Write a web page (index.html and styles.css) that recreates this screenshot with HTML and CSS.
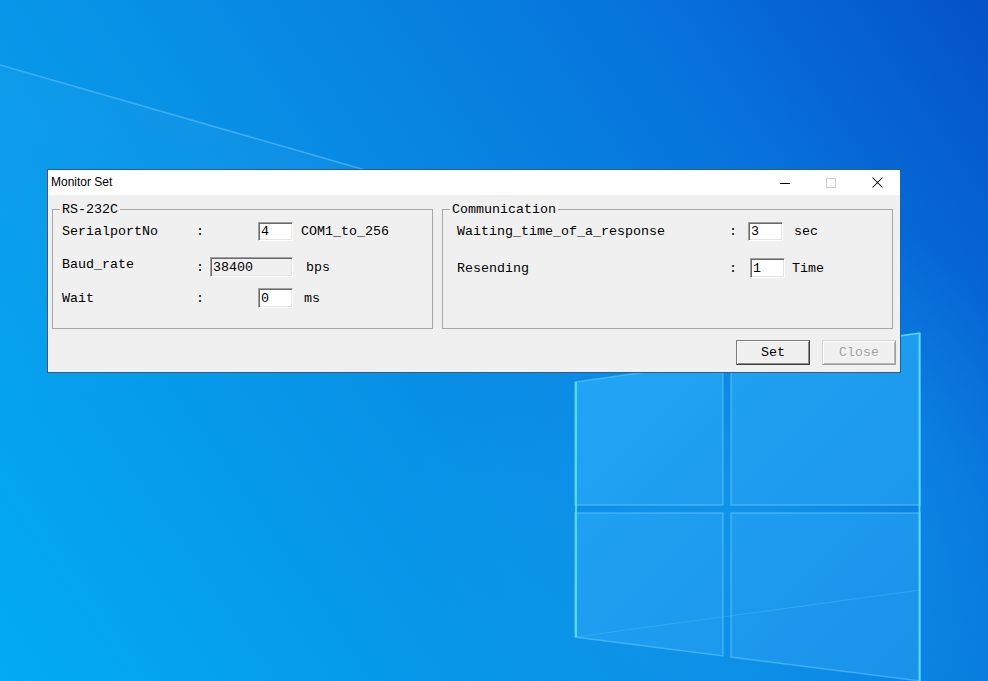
FILE: index.html
```html
<!DOCTYPE html>
<html lang="en">
<head>
<meta charset="utf-8">
<title>Monitor Set</title>
<link rel="stylesheet" href="styles.css">
</head>
<body>
<div class="desktop">
  <svg class="wallpaper" width="988" height="681" viewBox="0 0 988 681" aria-hidden="true">
    <defs>
      <linearGradient id="bg" gradientUnits="userSpaceOnUse" x1="0" y1="681" x2="988" y2="0">
        <stop offset="0" stop-color="#02abf4"/>
        <stop offset="0.4" stop-color="#0891e6"/>
        <stop offset="0.75" stop-color="#0774dc"/>
        <stop offset="1" stop-color="#0552c6"/>
      </linearGradient>
      <radialGradient id="glow" gradientUnits="userSpaceOnUse" cx="740" cy="520" r="330">
        <stop offset="0" stop-color="#1aa2f2" stop-opacity="0.55"/>
        <stop offset="1" stop-color="#1aa2f2" stop-opacity="0"/>
      </radialGradient>
      <linearGradient id="pane" gradientUnits="userSpaceOnUse" x1="575" y1="340" x2="920" y2="680">
        <stop offset="0" stop-color="#22a6f4"/>
        <stop offset="1" stop-color="#1a92ea"/>
      </linearGradient>
      <linearGradient id="beam" gradientUnits="userSpaceOnUse" x1="0" y1="100" x2="0" y2="420">
        <stop offset="0" stop-color="#ffffff" stop-opacity="0.03"/>
        <stop offset="1" stop-color="#ffffff" stop-opacity="0"/>
      </linearGradient>
    </defs>
    <rect width="988" height="681" fill="url(#bg)"/>
    <rect width="988" height="681" fill="url(#glow)"/>
    <polygon points="0,66 400,180 560,260 0,420" fill="url(#beam)"/>
    <line x1="0" y1="65" x2="400" y2="180" stroke="#4db4f4" stroke-width="1.6" stroke-opacity="0.8"/>
    <g stroke="#7fdcff" stroke-opacity="0.4" stroke-width="1.5">
      <polygon points="575,382 723,361 723,505 575,505" fill="url(#pane)"/>
      <polygon points="731,360 920,333 920,505 731,505" fill="url(#pane)"/>
      <polygon points="575,513 723,513 723,656 575,637" fill="url(#pane)"/>
      <polygon points="731,513 920,513 920,681 731,657" fill="url(#pane)"/>
    </g>
    <line x1="575" y1="637" x2="920" y2="590" stroke="#6fd0ff" stroke-opacity="0.25" stroke-width="1.2"/>
    <line x1="576" y1="382" x2="576" y2="637" stroke="#5fe4ff" stroke-width="2" stroke-opacity="0.85"/>
    <line x1="919.5" y1="333" x2="919.5" y2="681" stroke="#5fe4ff" stroke-width="2" stroke-opacity="0.85"/>
    <line x1="731" y1="360" x2="920" y2="333" stroke="#6fe0ff" stroke-width="1.5" stroke-opacity="0.7"/>
  </svg>

  <div class="window">
    <div class="titlebar">
      <span class="title">Monitor Set</span>
      <div class="caption">
        <span class="cap-btn">
          <svg width="10" height="10" viewBox="0 0 10 10"><path d="M0 5.5H10" stroke="#000" stroke-width="1"/></svg>
        </span>
        <span class="cap-btn">
          <svg width="10" height="10" viewBox="0 0 10 10"><rect x="0.5" y="0.5" width="9" height="9" fill="none" stroke="#cccccc" stroke-width="1"/></svg>
        </span>
        <span class="cap-btn">
          <svg width="11" height="11" viewBox="0 0 11 11"><path d="M0.5 0.5L10.5 10.5M10.5 0.5L0.5 10.5" stroke="#000" stroke-width="1.05"/></svg>
        </span>
      </div>
    </div>

    <div class="client">
      <div class="groups">
        <fieldset class="group group-rs">
          <legend>RS-232C</legend>
          <div class="group-body body-rs">
            <div class="row h19 gap16">
              <span class="lbl lbl-rs">SerialportNo</span>
              <span class="colon">:</span>
              <input class="field narrow off-54 h19" value="4" readonly>
              <span class="unit m8">COM1_to_256</span>
            </div>
            <div class="row h20 gap11">
              <span class="lbl lbl-rs lift">Baud_rate</span>
              <span class="colon">:</span>
              <input class="field wide off-6 h20" value="38400" disabled>
              <span class="unit m13">bps</span>
            </div>
            <div class="row h20">
              <span class="lbl lbl-rs">Wait</span>
              <span class="colon">:</span>
              <input class="field narrow off-54 h20" value="0" readonly>
              <span class="unit m11">ms</span>
            </div>
          </div>
        </fieldset>

        <fieldset class="group group-comm">
          <legend>Communication</legend>
          <div class="group-body body-comm">
            <div class="row h19 gap17">
              <span class="lbl lbl-comm">Waiting_time_of_a_response</span>
              <span class="colon">:</span>
              <input class="field narrow off-11 h19" value="3" readonly>
              <span class="unit m11">sec</span>
            </div>
            <div class="row h20">
              <span class="lbl lbl-comm">Resending</span>
              <span class="colon">:</span>
              <input class="field narrow off-13 h20" value="1" readonly>
              <span class="unit m7">Time</span>
            </div>
          </div>
        </fieldset>
      </div>

      <div class="actions">
        <button class="btn btn-default" type="button">Set</button>
        <button class="btn" type="button" disabled>Close</button>
      </div>
    </div>
  </div>
</div>
</body>
</html>
```

FILE: styles.css
```css
* {
  box-sizing: border-box;
}

html,
body {
  margin: 0;
  padding: 0;
}

body {
  width: 988px;
  height: 681px;
  overflow: hidden;
  background: #0a80dc;
  font-family: "Liberation Mono", "DejaVu Sans Mono", monospace;
}

.desktop {
  position: relative;
  width: 988px;
  height: 681px;
}

.wallpaper {
  position: absolute;
  left: 0;
  top: 0;
  display: block;
}

.window {
  position: absolute;
  left: 47px;
  top: 169px;
  width: 854px;
  height: 204px;
  border: 1px solid #2b5e89;
  background: #f0f0f0;
  display: flex;
  flex-direction: column;
}

.titlebar {
  height: 25px;
  flex: 0 0 25px;
  background: #ffffff;
  display: flex;
  align-items: center;
  justify-content: space-between;
}

.title {
  font-family: "Liberation Sans", Arial, sans-serif;
  font-size: 12px;
  color: #000;
  padding-left: 3px;
  line-height: 25px;
}

.caption {
  display: flex;
  height: 25px;
}

.cap-btn {
  width: 46px;
  height: 25px;
  display: flex;
  align-items: center;
  justify-content: center;
}

.cap-btn svg {
  display: block;
}

.client {
  flex: 1;
  padding: 7px 0 0 4px;
  display: flex;
  flex-direction: column;
}

.groups {
  display: flex;
  gap: 9px;
}

.group {
  margin: 0;
  padding: 0;
  border: 1px solid #a8a8a8;
  height: 127px;
  min-width: 0;
}

.group-rs {
  width: 381px;
}

.group-comm {
  width: 451px;
}

legend {
  margin-left: 7px;
  padding: 1px 2px 0;
  font-size: 13.333px;
  line-height: 14px;
  color: #000;
}

.group-body {
  padding-top: 5px;
}

.body-rs {
  padding-left: 9px;
}

.body-comm {
  padding-left: 14px;
}

.row {
  display: flex;
  align-items: center;
  font-size: 13.333px;
  color: #000;
  white-space: pre;
}

.h19 {
  height: 19px;
}

.h20 {
  height: 20px;
}

.gap16 {
  margin-bottom: 16px;
}

.gap11 {
  margin-bottom: 11px;
}

.gap17 {
  margin-bottom: 17px;
}

.lbl-rs {
  width: 134px;
}

.lbl-comm {
  width: 272px;
}

.lift {
  margin-bottom: 5px;
}

.colon {
  width: 8px;
}

.field {
  margin: 0;
  padding: 0 0 0 2px;
  border: 1px solid;
  border-color: #a0a0a0 #ffffff #ffffff #a0a0a0;
  box-shadow: inset 1px 1px 0 #696969, inset -1px -1px 0 #e3e3e3;
  background: #ffffff;
  font-family: "Liberation Mono", "DejaVu Sans Mono", monospace;
  font-size: 13.333px;
  color: #000;
  outline: none;
}

.field:disabled {
  background: #f0f0f0;
  color: #000;
  -webkit-text-fill-color: #000;
  opacity: 1;
}

.narrow {
  width: 35px;
}

.wide {
  width: 83px;
}

.off-54 {
  margin-left: 54px;
}

.off-6 {
  margin-left: 6px;
}

.off-11 {
  margin-left: 11px;
}

.off-13 {
  margin-left: 13px;
}

.m7 {
  margin-left: 7px;
}

.m8 {
  margin-left: 8px;
}

.m11 {
  margin-left: 11px;
}

.m13 {
  margin-left: 13px;
}

.actions {
  display: flex;
  justify-content: flex-end;
  gap: 12px;
  margin-top: 11px;
  padding-right: 4px;
}

.btn {
  width: 74px;
  height: 25px;
  margin: 0;
  padding: 0;
  font-family: "Liberation Mono", "DejaVu Sans Mono", monospace;
  font-size: 13.333px;
  color: #000;
  background: #f0f0f0;
  border: 1px solid;
  border-color: #a0a0a0 #5a5a5a #5a5a5a #a0a0a0;
  box-shadow: inset 1px 1px 0 #ffffff, inset -1px -1px 0 #8a8a8a;
}

.btn-default {
  border-color: #7a7a7a #404040 #404040 #7a7a7a;
}

.btn:disabled {
  color: #a0a0a0;
  text-shadow: 1px 1px 0 #ffffff;
  border-color: #d4d4d4 #a0a0a0 #a0a0a0 #d4d4d4;
  box-shadow: inset 1px 1px 0 #ffffff, inset -1px -1px 0 #b4b4b4;
}
```
